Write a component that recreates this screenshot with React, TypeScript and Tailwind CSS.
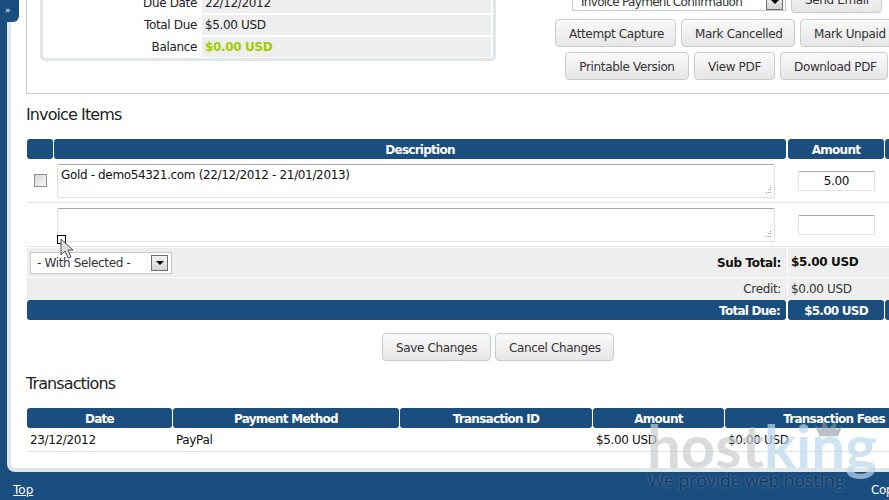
const btn =
  "h-[28px] px-[13px] pt-[1px] rounded-[4px] border border-[#c9cccf] bg-gradient-to-b from-[#fafafa] to-[#e6e6e6] text-[#333] shrink-0 whitespace-nowrap";
const head =
  "h-[20px] bg-[#1a4e7f] text-white font-bold text-center rounded-[3px] shrink-0 leading-[22px] tracking-[-0.75px]";
const title = "text-[16px] h-[24px] leading-[24px] text-[#222] tracking-[-0.9px]";

function Btn({ label, className = "" }: { label: string; className?: string }) {
  return <button className={`${btn} ${className}`}>{label}</button>;
}

function SelectArrow() {
  return (
    <span className="w-[17px] h-[16px] border border-[#707070] bg-gradient-to-b from-[#f4f4f4] to-[#d4d4d4] flex items-center justify-center shrink-0">
      <span className="w-0 h-0 border-x-[4px] border-x-transparent border-t-[4px] border-t-black" />
    </span>
  );
}

function Grip() {
  return (
    <svg width="9" height="9" viewBox="0 0 9 9" className="absolute right-[2px] bottom-[2px]">
      <g fill="#999">
        <rect x="7" y="1" width="1" height="1" />
        <rect x="5" y="3" width="1" height="1" />
        <rect x="7" y="3" width="1" height="1" />
        <rect x="3" y="6" width="1" height="1" />
        <rect x="5" y="6" width="1" height="1" />
        <rect x="7" y="6" width="1" height="1" />
      </g>
    </svg>
  );
}

function ItemRow({ text, amount, check }: { text: string; amount: string; check?: boolean }) {
  return (
    <div className="flex h-[44px] border-b border-[#e4e4e4]">
      <div className="w-[27px] shrink-0 flex items-center justify-center">
        {check && (
          <span className="w-[13px] h-[13px] border border-[#8e8f8f] bg-gradient-to-br from-[#d8d8d8] to-[#f6f6f6]" />
        )}
      </div>
      <div className="w-[734px] shrink-0 pl-[3px] pt-[5px]">
        <div className="relative w-[718px] h-[34px] rounded-[2px] border border-[#dfe1e6] border-t-[#aaa] px-[3px] pt-[1px] text-[#111]">
          {text}
          <Grip />
        </div>
      </div>
      <div className="pl-[10px] pt-[12px]">
        <div className="w-[77px] h-[20px] rounded-[2px] border border-[#dfe1e6] border-t-[#aaa] text-center leading-[18px] text-[#111]">
          {amount}
        </div>
      </div>
    </div>
  );
}

function InfoRow({ label, children, clip }: { label: string; children: React.ReactNode; clip?: boolean }) {
  return (
    <div className={`flex gap-[5px] ${clip ? "h-[20px]" : "h-[20px] mt-[2px]"}`}>
      <div className="w-[153px] text-right leading-[20px] text-[#222]">{label}</div>
      <div className="w-[289px] bg-[#eee] pl-[3px] leading-[20px] text-[#222]">{children}</div>
    </div>
  );
}

export default function App() {
  return (
    <div
      className="relative w-[889px] h-[500px] overflow-hidden bg-[#1a4e7f] text-[12px] text-[#222]"
      style={{ fontFamily: '"DejaVu Sans", Tahoma, sans-serif', letterSpacing: "-0.35px" }}
    >
      {/* white page area */}
      <div className="ml-[7px] w-[900px] h-[472px] overflow-hidden bg-white border-l-[4px] border-b-[4px] border-[#e1e6e8] rounded-bl-[8px]">
        <div className="-mt-[7px] pl-[15px] w-[1000px]">
          {/* summary box */}
          <div className="w-[950px] h-[101px] border-l border-b border-[#ccc] pl-[13px] flex">
            <div className="w-[456px] h-[68px] border-l-[3px] border-r-[3px] border-b-[3px] border-[#e1e6e8] rounded-b-[5px] pl-[1px]">
              <InfoRow label="Due Date" clip>22/12/2012</InfoRow>
              <InfoRow label="Total Due">$5.00 USD</InfoRow>
              <InfoRow label="Balance">
                <span className="font-bold text-[#a2cc00]">$0.00 USD</span>
              </InfoRow>
            </div>
            <div className="ml-[76px] w-[400px] text-[#333]">
              <div className="flex gap-[5px] h-[21px]">
                <div className="w-[214px] h-[19px] border border-[#c6c6c6] -mt-[1px] flex items-center justify-between pl-[8px] pr-[2px] shrink-0">
                  <span className="tracking-[-0.7px]">Invoice Payment Confirmation</span>
                  <SelectArrow />
                </div>
                <Btn label="Send Email" className="w-[91px] -mt-[8px]" />
              </div>
              <div className="flex gap-[5px] -ml-[17px] mt-[5px]">
                <Btn label="Attempt Capture" className="w-[121px]" />
                <Btn label="Mark Cancelled" className="w-[114px]" />
                <Btn label="Mark Unpaid" className="w-[99px]" />
              </div>
              <div className="flex gap-[5px] -ml-[7px] mt-[5px]">
                <Btn label="Printable Version" className="w-[124px]" />
                <Btn label="View PDF" className="w-[81px]" />
                <Btn label="Download PDF" className="w-[108px]" />
              </div>
            </div>
          </div>

          <h2 className={`${title} mt-[9px]`}>Invoice Items</h2>

          {/* invoice items table */}
          <div className="ml-[1px] mt-[12px]">
            <div className="flex gap-[1px]">
              <div className={`${head} w-[26px]`} />
              <div className={`${head} w-[732px] mr-[1px]`}>Description</div>
              <div className={`${head} w-[96px]`}>Amount</div>
              <div className={`${head} w-[30px]`} />
            </div>
            <ItemRow text="Gold - demo54321.com (22/12/2012 - 21/01/2013)" amount="5.00" check />
            <ItemRow text="" amount="" />
            <div className="flex h-[30px] mt-[1px] bg-[#eee] border-b border-white">
              <div className="w-[760px] shrink-0 flex items-center justify-between pl-[3px] pr-[6px]">
                <div className="w-[142px] h-[22px] bg-white border border-[#c9c9c9] flex items-center justify-between pl-[6px] pr-[3px] text-[#333]">
                  <span>- With Selected -</span>
                  <SelectArrow />
                </div>
                <span className="font-bold text-[#111]">Sub Total:</span>
              </div>
              <div className="border-l border-white pl-[3px] leading-[29px] font-bold text-[#111]">$5.00 USD</div>
            </div>
            <div className="flex h-[22px] bg-[#eee] leading-[22px]">
              <div className="w-[760px] shrink-0 text-right pr-[6px] text-[#333]">Credit:</div>
              <div className="border-l border-white pl-[3px] text-[#333]">$0.00 USD</div>
            </div>
            <div className="flex gap-[1px] bg-white">
              <div className={`${head} w-[759px] text-right pr-[6px] mr-[1px]`}>Total Due:</div>
              <div className={`${head} w-[96px]`}>$5.00 USD</div>
              <div className={`${head} w-[30px]`} />
            </div>
          </div>

          <div className="flex gap-[4px] ml-[356px] mt-[13px]">
            <Btn label="Save Changes" className="w-[109px]" />
            <Btn label="Cancel Changes" className="w-[119px]" />
          </div>

          <h2 className={`${title} mt-[11px]`}>Transactions</h2>

          {/* transactions table */}
          <div className="ml-[1px] mt-[12px]">
            <div className="flex gap-[1px]">
              <div className={`${head} w-[145px]`}>Date</div>
              <div className={`${head} w-[226px]`}>Payment Method</div>
              <div className={`${head} w-[192px]`}>Transaction ID</div>
              <div className={`${head} w-[131px]`}>Amount</div>
              <div className={`${head} w-[218px]`}>Transaction Fees</div>
            </div>
            <div className="flex h-[24px] w-[900px] border-b border-[#e4e4e4] leading-[25px] text-[#111]">
              <div className="w-[146px] pl-[3px]">23/12/2012</div>
              <div className="w-[420px] pl-[3px]">PayPal</div>
              <div className="w-[132px] pl-[3px]">$5.00 USD</div>
              <div className="pl-[3px]">$0.00 USD</div>
            </div>
          </div>
        </div>
      </div>

      {/* footer */}
      <div className="flex justify-between h-[28px] pl-[13px] leading-[36px] text-white">
        <a className="underline tracking-normal">Top</a>
        <span className="w-[18px] overflow-hidden whitespace-nowrap">Copyright</span>
      </div>

      {/* sidebar tab */}
      <div className="absolute left-0 top-0 w-[19px] h-[22px] bg-[#1a4e7f] rounded-br-[6px] text-white text-[9px] leading-[21px] pl-[5px]">
        »
      </div>

      {/* cursor */}
      <div className="absolute left-[57px] top-[235px] w-[9px] h-[9px] border border-black bg-white" />
      <svg className="absolute left-[60px] top-[238px]" width="14" height="22" viewBox="0 0 14 22">
        <path d="M1 1 L1 17 L5 13 L8 20 L11 19 L8 12 L13 12 Z" fill="#ddd" stroke="#555" strokeWidth="1" />
      </svg>

      {/* watermark */}
      <div
        className="absolute left-[647px] top-[420px] w-[236px] h-[74px] pointer-events-none"
        style={{ letterSpacing: 0 }}
      >
        <svg className="absolute left-[166px] -top-[2px] opacity-60" width="30" height="20" viewBox="0 0 36 20">
          <path d="M2 6 L9 12 L13 1 L19 11 L27 2 L28 12 L35 8 L30 20 L8 20 Z" fill="#8d9aa3" />
        </svg>
        <div
          className="h-[50px] text-[60px] leading-[50px] font-bold whitespace-nowrap opacity-70"
          style={{ fontFamily: "Lato, sans-serif" }}
        >
          <span className="text-[#c9ccce]">host</span>
          <span className="text-[#bcd9ee]">king</span>
        </div>
        <div
          className="text-[17.5px] leading-[20px] pl-[1px] text-[#133c66] whitespace-nowrap [text-shadow:0_0_3px_rgba(255,255,255,0.3)]"
          style={{ fontFamily: '"Open Sans", sans-serif' }}
        >
          We provide web hosting
        </div>
      </div>
    </div>
  );
}
